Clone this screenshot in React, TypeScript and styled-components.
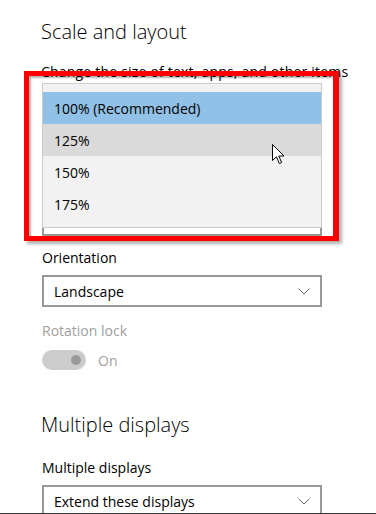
import React from 'react'
import styled, { createGlobalStyle } from 'styled-components'

const GlobalStyle = createGlobalStyle`
    html, body {
        margin: 0;
        padding: 0;
        background: #ffffff;
    }
    body {
        font-family: "Segoe UI", "Open Sans", "Liberation Sans", sans-serif;
        color: #000000;
    }
`;

const scaleOptions = ['100% (Recommended)', '125%', '150%', '175%'];

const Chevron: React.FC<{}> = () => (
    <svg width="12" height="7" viewBox="0 0 12 7">
        <path d="M0.5 0.5 L6 6 L11.5 0.5" fill="none" stroke="#666666" strokeWidth="1" />
    </svg>
)

const Pointer: React.FC<{}> = () => (
    <svg width="14" height="21" viewBox="0 0 14 21">
        <path
            d="M0.5 0.5 L0.5 16.5 L4.5 12.8 L7.3 19.5 L9.6 18.5 L6.8 12 L12 12 Z"
            fill="#ffffff"
            stroke="#000000"
            strokeWidth="1"
            strokeLinejoin="miter"
        />
    </svg>
)

const App: React.FC<{}> = () => {
    return (
        <>
            <GlobalStyle />
            <Page>
                <Heading>Scale and layout</Heading>
                <Description>Change the size of text, apps, and other items</Description>
                <PopupList>
                    {scaleOptions.map((opt, i) => (
                        <ListItem key={opt} $state={i === 0 ? 'selected' : i === 1 ? 'hover' : 'normal'}>
                            {opt}
                        </ListItem>
                    ))}
                </PopupList>
                <ComboTail />

                <Label $gap={12}>Orientation</Label>
                <ComboBox>
                    <span>Landscape</span>
                    <Chevron />
                </ComboBox>

                <Label $gap={14} $disabled>Rotation lock</Label>
                <ToggleRow>
                    <Toggle>
                        <Knob />
                    </Toggle>
                    <ToggleText>On</ToggleText>
                </ToggleRow>

                <Heading $second>Multiple displays</Heading>
                <Label $gap={19}>Multiple displays</Label>
                <ComboBox>
                    <span>Extend these displays</span>
                    <Chevron />
                </ComboBox>

                <RedFrame />
                <Cursor>
                    <Pointer />
                </Cursor>
            </Page>
        </>
    )
}

const Page = styled.div`
    position: relative;
    box-sizing: border-box;
    width: 376px;
    height: 514px;
    overflow: hidden;
    padding: 18px 54px 0 42px;
    border-bottom: 1px solid #333333;
`;
const Heading = styled.div<{ $second?: boolean }>`
    font-size: 20px;
    line-height: 28px;
    font-weight: 300;
    margin-left: -1px;
    margin-top: ${({ $second }) => ($second ? '41px' : '0')};
`;
const Description = styled.div`
    font-size: 14px;
    line-height: 20px;
    margin-top: 16px;
    margin-left: -1px;
    white-space: nowrap;
    letter-spacing: 0.2px;
    height: 21px;
`;
const PopupList = styled.div`
    box-sizing: border-box;
    width: 280px;
    background: #f2f2f2;
    border: 1px solid #cccccc;
    padding: 8px 0 7px 0;
`;
const ListItem = styled.div<{ $state: 'selected' | 'hover' | 'normal' }>`
    height: 32px;
    display: flex;
    align-items: center;
    padding-left: 11px;
    font-size: 14px;
    background: ${({ $state }) =>
        $state === 'selected' ? '#91c1e7' : $state === 'hover' ? '#dadada' : 'transparent'};
`;
const ComboTail = styled.div`
    box-sizing: border-box;
    width: 280px;
    height: 8px;
    background: #ffffff;
    border: 2px solid #999999;
    border-top: none;
`;
const Label = styled.div<{ $disabled?: boolean; $gap: number }>`
    font-size: 14px;
    line-height: 20px;
    margin-top: ${({ $gap }) => $gap}px;
    color: ${({ $disabled }) => ($disabled ? '#a0a0a0' : '#000000')};
`;
const ComboBox = styled.div`
    box-sizing: border-box;
    width: 280px;
    height: 32px;
    margin-top: 7px;
    border: 2px solid #999999;
    display: flex;
    align-items: center;
    justify-content: space-between;
    padding: 0 10px 0 10px;
    font-size: 14px;
`;
const ToggleRow = styled.div`
    display: flex;
    align-items: center;
    gap: 12px;
    margin-top: 9px;
`;
const Toggle = styled.div`
    width: 44px;
    height: 20px;
    border-radius: 10px;
    background: #cccccc;
    display: flex;
    align-items: center;
    justify-content: flex-end;
    padding-right: 5px;
    box-sizing: border-box;
`;
const Knob = styled.div`
    width: 10px;
    height: 10px;
    border-radius: 50%;
    background: #999999;
`;
const ToggleText = styled.span`
    font-size: 14px;
    color: #a0a0a0;
`;
const RedFrame = styled.div`
    position: absolute;
    left: 24px;
    top: 71px;
    width: 315px;
    height: 170px;
    box-sizing: border-box;
    border: 5px solid #ff0000;
    border-right-width: 6px;
    box-shadow: 3px 3px 3px rgba(0, 0, 0, 0.3), inset 2px 2px 2px rgba(0, 0, 0, 0.3);
`;
const Cursor = styled.div`
    position: absolute;
    left: 272px;
    top: 144px;
    line-height: 0;
`;

export default App
